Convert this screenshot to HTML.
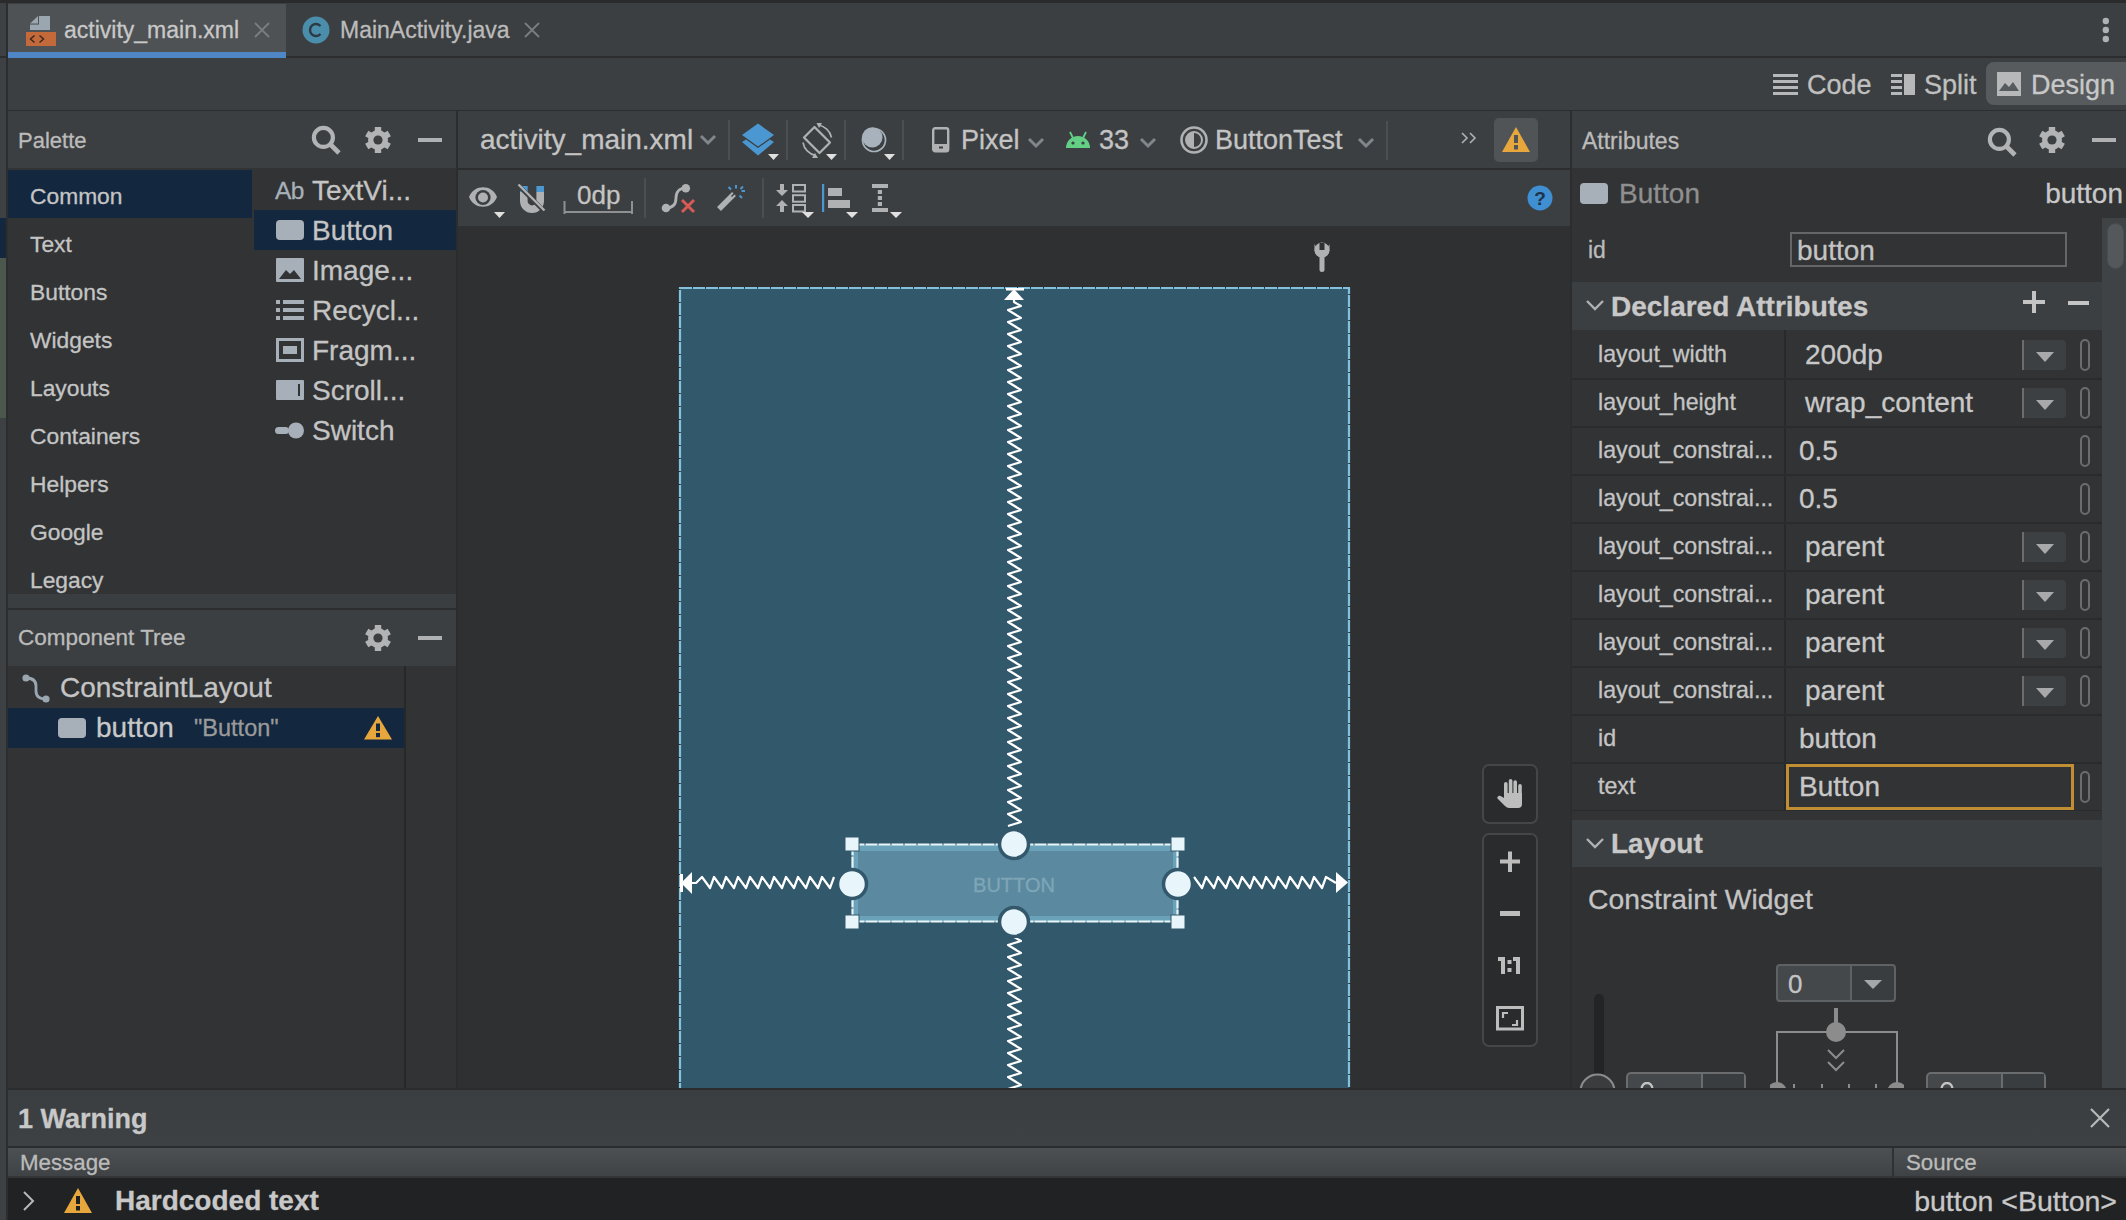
<!DOCTYPE html>
<html><head><meta charset="utf-8"><style>
html,body{margin:0;padding:0;width:2126px;height:1220px;overflow:hidden;background:#3c3f41;}
body>div,body>svg{position:absolute;}
.t{position:absolute;white-space:nowrap;font-family:"Liberation Sans", sans-serif;-webkit-text-stroke:0.3px currentColor;}
</style></head><body>
<div style="left:0px;top:0px;width:2126px;height:1220px;background:#3c3f41;"></div>
<div style="left:0px;top:0px;width:2126px;height:3px;background:#2a2b2d;"></div>
<div style="left:0px;top:3px;width:6px;height:1217px;background:#3e4143;"></div>
<div style="left:6px;top:3px;width:2px;height:1217px;background:#2b2d2f;"></div>
<div style="left:0px;top:218px;width:6px;height:40px;background:#13273f;"></div>
<div style="left:0px;top:258px;width:6px;height:160px;background:#4b564c;"></div>
<div style="left:0px;top:56px;width:2126px;height:1.5px;background:#2b2d2f;"></div>
<div style="left:8px;top:4px;width:278px;height:48px;background:#4e5254;"></div>
<div style="left:8px;top:52px;width:278px;height:6px;background:#4f86c6;"></div>
<svg style="left:26px;top:14px;" width="32" height="34" viewBox="0 0 32 34"><path d="M4 9.6 L12 2 L12 9.6 Z" fill="#9aa7b0"/><rect x="13" y="2" width="11" height="14" fill="#9aa7b0"/><rect x="4" y="10.6" width="20" height="5.4" fill="#9aa7b0"/><rect x="0" y="18" width="30" height="14" fill="#c4693a"/><path d="M8.5 21.5 L4.5 25 L8.5 28.5 M13.5 21.5 L17.5 25 L13.5 28.5" stroke="#3a2a22" stroke-width="1.5" fill="none"/></svg>
<div class="t" style="left:64px;top:18.53px;font-size:23px;line-height:23px;color:#c8c8c8;font-weight:400;">activity_main.xml</div>
<svg style="left:253px;top:21px;" width="18" height="18" viewBox="0 0 18 18"><path d="M2 2 L16 16 M16 2 L2 16" stroke="#7a7d80" stroke-width="1.8"/></svg>
<svg style="left:302px;top:16px;" width="28" height="28" viewBox="0 0 28 28"><circle cx="14" cy="14" r="13.5" fill="#4b8eab"/><path d="M18.5 10 A6 6 0 1 0 18.5 18" stroke="#2b3a44" stroke-width="2.4" fill="none"/></svg>
<div class="t" style="left:340px;top:18.53px;font-size:23px;line-height:23px;color:#bbbbbb;font-weight:400;">MainActivity.java</div>
<svg style="left:523px;top:21px;" width="18" height="18" viewBox="0 0 18 18"><path d="M2 2 L16 16 M16 2 L2 16" stroke="#7a7d80" stroke-width="1.8"/></svg>
<svg style="left:2098px;top:10px;" width="14" height="40" viewBox="0 0 14 40"><circle cx="7.8" cy="11" r="3.2" fill="#afb1b3"/><circle cx="7.8" cy="20" r="3.2" fill="#afb1b3"/><circle cx="7.8" cy="29" r="3.2" fill="#afb1b3"/></svg>
<div style="left:8px;top:110px;width:2118px;height:1px;background:#2b2d2f;"></div>
<div style="left:1986px;top:62px;width:140px;height:43px;background:#575b5e;border-radius:8px 0 0 8px"></div>
<svg style="left:1773px;top:73px;" width="26" height="22" viewBox="0 0 26 22"><rect x="0" y="1" width="25" height="3" fill="#b6b8ba"/><rect x="0" y="7" width="25" height="3" fill="#b6b8ba"/><rect x="0" y="13" width="25" height="3" fill="#b6b8ba"/><rect x="0" y="19" width="25" height="3" fill="#b6b8ba"/></svg>
<div class="t" style="left:1807px;top:72.14px;font-size:27px;line-height:27px;color:#c0c0c0;font-weight:400;">Code</div>
<svg style="left:1891px;top:73px;" width="26" height="22" viewBox="0 0 26 22"><rect x="0" y="1" width="11" height="3" fill="#b6b8ba"/><rect x="0" y="7" width="11" height="3" fill="#b6b8ba"/><rect x="0" y="13" width="11" height="3" fill="#b6b8ba"/><rect x="0" y="19" width="11" height="3" fill="#b6b8ba"/><rect x="13" y="1" width="11" height="21" fill="#b6b8ba"/></svg>
<div class="t" style="left:1924px;top:72.14px;font-size:27px;line-height:27px;color:#c0c0c0;font-weight:400;">Split</div>
<svg style="left:1997px;top:72px;" width="25" height="25" viewBox="0 0 25 25"><rect x="0" y="0" width="24" height="24" fill="#b6b8ba"/><path d="M2 19 L8 11 L12 15 L16 10 L22 19 Z" fill="#575b5e"/></svg>
<div class="t" style="left:2031px;top:72.14px;font-size:27px;line-height:27px;color:#c8c8c8;font-weight:400;">Design</div>
<div style="left:8px;top:111px;width:448px;height:57px;background:#3c3f41;"></div>
<div class="t" style="left:18px;top:130.38px;font-size:22px;line-height:22px;color:#bbbbbb;font-weight:400;">Palette</div>
<svg style="left:310px;top:124px;" width="34" height="34" viewBox="0 0 34 34"><circle cx="13.4" cy="13.4" r="9.5" stroke="#b1b3b5" stroke-width="4.2" fill="none"/><path d="M20.5 20.5 L29 29" stroke="#b1b3b5" stroke-width="4.6"/></svg>
<svg style="left:365px;top:127px;" width="26" height="26" viewBox="0 0 26 26"><rect x="9.8" y="0" width="6.4" height="26" transform="rotate(0 13 13)" fill="#b1b3b5"/><rect x="9.8" y="0" width="6.4" height="26" transform="rotate(60 13 13)" fill="#b1b3b5"/><rect x="9.8" y="0" width="6.4" height="26" transform="rotate(120 13 13)" fill="#b1b3b5"/><circle cx="13" cy="13" r="10" fill="#b1b3b5"/><circle cx="13" cy="13" r="4.6" fill="#3c3f41"/></svg>
<div style="left:418px;top:138px;width:24px;height:4px;background:#afb1b3;"></div>
<div style="left:8px;top:168px;width:448px;height:426px;background:#313335;"></div>
<div style="left:8px;top:170px;width:244px;height:48px;background:#13273f;"></div>
<div class="t" style="left:30px;top:185.20px;font-size:22.8px;line-height:22.8px;color:#c4c4c4;font-weight:400;">Common</div>
<div class="t" style="left:30px;top:233.20px;font-size:22.8px;line-height:22.8px;color:#c4c4c4;font-weight:400;">Text</div>
<div class="t" style="left:30px;top:281.20px;font-size:22.8px;line-height:22.8px;color:#c4c4c4;font-weight:400;">Buttons</div>
<div class="t" style="left:30px;top:329.20px;font-size:22.8px;line-height:22.8px;color:#c4c4c4;font-weight:400;">Widgets</div>
<div class="t" style="left:30px;top:377.20px;font-size:22.8px;line-height:22.8px;color:#c4c4c4;font-weight:400;">Layouts</div>
<div class="t" style="left:30px;top:425.20px;font-size:22.8px;line-height:22.8px;color:#c4c4c4;font-weight:400;">Containers</div>
<div class="t" style="left:30px;top:473.20px;font-size:22.8px;line-height:22.8px;color:#c4c4c4;font-weight:400;">Helpers</div>
<div class="t" style="left:30px;top:521.20px;font-size:22.8px;line-height:22.8px;color:#c4c4c4;font-weight:400;">Google</div>
<div class="t" style="left:30px;top:569.20px;font-size:22.8px;line-height:22.8px;color:#c4c4c4;font-weight:400;">Legacy</div>
<div style="left:254px;top:210px;width:202px;height:40px;background:#13273f;"></div>
<div class="t" style="left:312px;top:177.30px;font-size:28px;line-height:28px;color:#c4c4c4;font-weight:400;">TextVi...</div>
<div class="t" style="left:312px;top:217.30px;font-size:28px;line-height:28px;color:#c4c4c4;font-weight:400;">Button</div>
<div class="t" style="left:312px;top:257.30px;font-size:28px;line-height:28px;color:#c4c4c4;font-weight:400;">Image...</div>
<div class="t" style="left:312px;top:297.30px;font-size:28px;line-height:28px;color:#c4c4c4;font-weight:400;">Recycl...</div>
<div class="t" style="left:312px;top:337.30px;font-size:28px;line-height:28px;color:#c4c4c4;font-weight:400;">Fragm...</div>
<div class="t" style="left:312px;top:377.30px;font-size:28px;line-height:28px;color:#c4c4c4;font-weight:400;">Scroll...</div>
<div class="t" style="left:312px;top:417.30px;font-size:28px;line-height:28px;color:#c4c4c4;font-weight:400;">Switch</div>
<div class="t" style="left:275px;top:179.26px;font-size:24.5px;line-height:24.5px;color:#a7b0b8;font-weight:400;letter-spacing:-0.5px;-webkit-text-stroke:0.3px #a7b0b8">Ab</div>
<svg style="left:276px;top:220px;" width="29" height="21" viewBox="0 0 29 21"><rect x="0" y="0" width="28" height="20" rx="4" fill="#a7b0b8"/></svg>
<svg style="left:276px;top:258px;" width="29" height="25" viewBox="0 0 29 25"><rect x="0" y="0" width="28" height="24" rx="1" fill="#a7b0b8"/><path d="M3 21 L10 12 L14 16 L18 12 L25 21 Z" fill="#313335"/></svg>
<svg style="left:276px;top:300px;" width="29" height="22" viewBox="0 0 29 22"><rect x="0" y="0" width="4" height="4" fill="#a7b0b8"/><rect x="7" y="0" width="21" height="4" fill="#a7b0b8"/><rect x="0" y="8" width="4" height="4" fill="#a7b0b8"/><rect x="7" y="8" width="21" height="4" fill="#a7b0b8"/><rect x="0" y="16" width="4" height="4" fill="#a7b0b8"/><rect x="7" y="16" width="21" height="4" fill="#a7b0b8"/></svg>
<svg style="left:276px;top:338px;" width="29" height="25" viewBox="0 0 29 25"><rect x="1.5" y="1.5" width="25" height="21" fill="none" stroke="#a7b0b8" stroke-width="3"/><rect x="7" y="8" width="14" height="8" fill="#a7b0b8"/></svg>
<svg style="left:276px;top:380px;" width="29" height="21" viewBox="0 0 29 21"><rect x="0" y="0" width="28" height="20" rx="1" fill="#a7b0b8"/><rect x="22" y="4" width="2" height="12" fill="#313335"/></svg>
<svg style="left:275px;top:420px;" width="30" height="22" viewBox="0 0 30 22"><rect x="0" y="7" width="14" height="7" rx="3.5" fill="#a7b0b8"/><circle cx="21" cy="10.5" r="8" fill="#a7b0b8"/></svg>
<div style="left:8px;top:594px;width:448px;height:14px;background:#3b3e40;"></div>
<div style="left:8px;top:608px;width:448px;height:2px;background:#2b2d2f;"></div>
<div style="left:8px;top:610px;width:448px;height:56px;background:#3c3f41;"></div>
<div class="t" style="left:18px;top:626.95px;font-size:22.5px;line-height:22.5px;color:#bbbbbb;font-weight:400;">Component Tree</div>
<svg style="left:365px;top:625px;" width="26" height="26" viewBox="0 0 26 26"><rect x="9.8" y="0" width="6.4" height="26" transform="rotate(0 13 13)" fill="#b1b3b5"/><rect x="9.8" y="0" width="6.4" height="26" transform="rotate(60 13 13)" fill="#b1b3b5"/><rect x="9.8" y="0" width="6.4" height="26" transform="rotate(120 13 13)" fill="#b1b3b5"/><circle cx="13" cy="13" r="10" fill="#b1b3b5"/><circle cx="13" cy="13" r="4.6" fill="#3c3f41"/></svg>
<div style="left:418px;top:636px;width:24px;height:4px;background:#afb1b3;"></div>
<div style="left:8px;top:666px;width:448px;height:422px;background:#313335;"></div>
<div style="left:404px;top:666px;width:2px;height:422px;background:#262729;"></div>
<div style="left:8px;top:708px;width:396px;height:40px;background:#13273f;"></div>
<svg style="left:20px;top:672px;" width="32" height="32" viewBox="0 0 32 32"><circle cx="6" cy="6" r="3.6" fill="#9aa7b0"/><circle cx="26" cy="27" r="3.6" fill="#9aa7b0"/><path d="M6 6 C 12 6, 16 8, 16 14 L 16 19 C 16 25, 20 27, 26 27" stroke="#9aa7b0" stroke-width="2.8" fill="none"/></svg>
<div class="t" style="left:60px;top:674.30px;font-size:28px;line-height:28px;color:#c4c4c4;font-weight:400;">ConstraintLayout</div>
<svg style="left:58px;top:718px;" width="29" height="21" viewBox="0 0 29 21"><rect x="0" y="0" width="28" height="20" rx="4" fill="#a7b0b8"/></svg>
<div class="t" style="left:96px;top:714.30px;font-size:28px;line-height:28px;color:#c8c8c8;font-weight:400;">button</div>
<div class="t" style="left:194px;top:716.61px;font-size:23.5px;line-height:23.5px;color:#9a9a9a;font-weight:400;">"Button"</div>
<svg style="left:364px;top:716px;" width="28" height="23.5" viewBox="0 0 28 23.5"><path d="M14.0 0 L28 23.5 L0 23.5 Z" fill="#e7a73c"/><rect x="12.0" y="7.5200000000000005" width="4" height="7.5200000000000005" fill="#13273f"/><rect x="12.0" y="16.919999999999998" width="4" height="4.2299999999999995" fill="#13273f"/></svg>
<div style="left:456px;top:111px;width:2px;height:977px;background:#2a2c2e;"></div>
<div style="left:458px;top:111px;width:1112px;height:57px;background:#3c3f41;"></div>
<div style="left:458px;top:168px;width:1112px;height:2px;background:#2b2d2f;"></div>
<div style="left:458px;top:170px;width:1112px;height:56px;background:#3c3f41;"></div>
<div style="left:458px;top:226px;width:1112px;height:862px;background:#2e3032;"></div>
<div class="t" style="left:480px;top:126.30px;font-size:28px;line-height:28px;color:#c4c4c4;font-weight:400;">activity_main.xml</div>
<svg style="left:699px;top:134px;" width="18" height="12" viewBox="0 0 18 12"><path d="M2 2 L9 9 L16 2" stroke="#7f878c" stroke-width="3" fill="none"/></svg>
<div style="left:728px;top:120px;width:2px;height:40px;background:#4c4f52;"></div>
<div style="left:786px;top:120px;width:2px;height:40px;background:#4c4f52;"></div>
<div style="left:844px;top:120px;width:2px;height:40px;background:#4c4f52;"></div>
<div style="left:902px;top:120px;width:2px;height:40px;background:#4c4f52;"></div>
<svg style="left:741px;top:122px;" width="36" height="36" viewBox="0 0 36 36"><path d="M17 1.5 L33 13 L17 24.5 L1 13 Z" fill="#4b97d2"/><path d="M1 20 L5 17.5 L17 26 L29 17.5 L33 20 L17 33.5 Z" fill="#4b97d2"/></svg>
<svg style="left:768px;top:154px;" width="12" height="8" viewBox="0 0 12 8"><path d="M0 0 L11 0 L5.5 6 Z" fill="#e0e0e0"/></svg>
<svg style="left:798px;top:122px;" width="40" height="36" viewBox="0 0 40 36"><path d="M16.5 5 L32 20.5 L21.5 31 L6 15.5 Z" stroke="#afb1b3" stroke-width="2.2" fill="none" stroke-linejoin="round"/><path d="M20 3 A16 16 0 0 1 33.5 15.5" stroke="#afb1b3" stroke-width="1.6" fill="none"/><path d="M18.5 1 L24 1 L21 6 Z" fill="#afb1b3"/><path d="M5 20.5 A16 16 0 0 0 17.5 33.5" stroke="#afb1b3" stroke-width="1.6" fill="none"/><path d="M20 36 L14 36 L17 31 Z" fill="#afb1b3"/></svg>
<svg style="left:826px;top:154px;" width="12" height="8" viewBox="0 0 12 8"><path d="M0 0 L11 0 L5.5 6 Z" fill="#e0e0e0"/></svg>
<svg style="left:860px;top:126px;" width="34" height="30" viewBox="0 0 34 30"><circle cx="14" cy="14" r="11.5" stroke="#a7b2bc" stroke-width="1.7" fill="none"/><circle cx="12.3" cy="11.4" r="10.2" fill="#a7b2bc"/><path d="M12.3 1.2 A10.2 10.2 0 0 1 22.5 11.4 A11 11 0 0 1 12 24" fill="none"/></svg>
<svg style="left:884px;top:154px;" width="12" height="8" viewBox="0 0 12 8"><path d="M0 0 L11 0 L5.5 6 Z" fill="#e0e0e0"/></svg>
<svg style="left:932px;top:127px;" width="18" height="26" viewBox="0 0 18 26"><rect x="1.2" y="1.2" width="15" height="23" rx="2" stroke="#afb1b3" stroke-width="2.4" fill="none"/><rect x="1" y="17" width="16" height="7" fill="#afb1b3"/><rect x="7" y="19.5" width="4" height="2" fill="#3c3f41"/></svg>
<div class="t" style="left:961px;top:127.14px;font-size:27px;line-height:27px;color:#c4c4c4;font-weight:400;">Pixel</div>
<svg style="left:1027px;top:137px;" width="18" height="12" viewBox="0 0 18 12"><path d="M2 2 L9 9 L16 2" stroke="#7f878c" stroke-width="3" fill="none"/></svg>
<svg style="left:1065px;top:130px;" width="26" height="20" viewBox="0 0 26 20"><path d="M1 18 A12 12 0 0 1 25 18 Z" fill="#62cf84"/><path d="M5 2 L8 8 M21 2 L18 8" stroke="#62cf84" stroke-width="1.8"/><circle cx="8" cy="13" r="1.6" fill="#3c3f41"/><circle cx="18" cy="13" r="1.6" fill="#3c3f41"/></svg>
<div class="t" style="left:1099px;top:127.14px;font-size:27px;line-height:27px;color:#c4c4c4;font-weight:400;">33</div>
<svg style="left:1139px;top:137px;" width="18" height="12" viewBox="0 0 18 12"><path d="M2 2 L9 9 L16 2" stroke="#7f878c" stroke-width="3" fill="none"/></svg>
<svg style="left:1179px;top:125px;" width="30" height="30" viewBox="0 0 30 30"><circle cx="15" cy="15" r="12.5" stroke="#afb1b3" stroke-width="2.6" fill="none"/><path d="M15 7 A8 8 0 0 0 15 23 Z" fill="#afb1b3"/><circle cx="15" cy="15" r="8" stroke="#afb1b3" stroke-width="2" fill="none"/></svg>
<div class="t" style="left:1215px;top:127.14px;font-size:27px;line-height:27px;color:#c4c4c4;font-weight:400;">ButtonTest</div>
<svg style="left:1357px;top:137px;" width="18" height="12" viewBox="0 0 18 12"><path d="M2 2 L9 9 L16 2" stroke="#7f878c" stroke-width="3" fill="none"/></svg>
<div style="left:1386px;top:121px;width:2px;height:39px;background:#4c4f52;"></div>
<svg style="left:1460px;top:131px;" width="18" height="14" viewBox="0 0 18 14"><path d="M2 2 L7 7 L2 12 M10 2 L15 7 L10 12" stroke="#afb1b3" stroke-width="1.6" fill="none"/></svg>
<div style="left:1494px;top:118px;width:44px;height:44px;background:#505457;border-radius:5px"></div>
<svg style="left:1502px;top:127px;" width="28" height="25" viewBox="0 0 28 25"><path d="M14.0 0 L28 25 L0 25 Z" fill="#e7a73c"/><rect x="12.0" y="8.0" width="4" height="8.0" fill="#505457"/><rect x="12.0" y="18.0" width="4" height="4.5" fill="#505457"/></svg>
<svg style="left:468px;top:184px;" width="34" height="26" viewBox="0 0 34 26"><path d="M1 13 C 6 0, 24 0, 29 13 C 24 26, 6 26, 1 13 Z" fill="#afb1b3"/><circle cx="15" cy="13.5" r="7.6" fill="#3c3f41"/><circle cx="15" cy="13.5" r="5" fill="#afb1b3"/></svg>
<svg style="left:494px;top:212px;" width="12" height="8" viewBox="0 0 12 8"><path d="M0 0 L11 0 L5.5 6 Z" fill="#e0e0e0"/></svg>
<svg style="left:516px;top:182px;" width="34" height="34" viewBox="0 0 34 34"><path d="M7.8 10 L7.8 19 A8.2 8.2 0 0 0 24.2 19 L24.2 10" stroke="#afb1b3" stroke-width="7.6" fill="none"/><rect x="4" y="4" width="7.7" height="6" fill="#4b97d2"/><rect x="20.4" y="4" width="7.6" height="6" fill="#4b97d2"/><path d="M1 2 L29 30" stroke="#3c3f41" stroke-width="4.5"/><path d="M2.5 2.5 L28.5 28.5" stroke="#afb1b3" stroke-width="2.4"/></svg>
<div class="t" style="left:577px;top:182.49px;font-size:26px;line-height:26px;color:#c4c4c4;font-weight:400;">0dp</div>
<svg style="left:560px;top:198px;" width="76" height="18" viewBox="0 0 76 18"><path d="M4.5 3 L4.5 16 M72 3 L72 16 M4.5 14 L72 14" stroke="#8e9092" stroke-width="2" fill="none"/></svg>
<div style="left:644px;top:178px;width:2px;height:40px;background:#4c4f52;"></div>
<svg style="left:658px;top:182px;" width="40" height="34" viewBox="0 0 40 34"><circle cx="27.8" cy="6.2" r="4.3" fill="#afb1b3"/><circle cx="8" cy="26" r="4.3" fill="#afb1b3"/><path d="M8 26 C 15 26, 18 22, 18 16 C 18 10, 21 6.2, 27.8 6.2" stroke="#afb1b3" stroke-width="2.8" fill="none"/><path d="M24 18 L36 30 M36 18 L24 30" stroke="#d65a55" stroke-width="3"/></svg>
<svg style="left:714px;top:182px;" width="34" height="34" viewBox="0 0 34 34"><path d="M5 27 L20 12" stroke="#afb1b3" stroke-width="5.5"/><path d="M17.5 14.5 L20.5 11.5" stroke="#3c3f41" stroke-width="1.5"/><path d="M22 3 L22 6.5 M27.5 9 L31 9 M14.5 5 L17 7.5 M29 4.5 L26.5 7 M28 16 L25.5 13.5" stroke="#4b97d2" stroke-width="2"/></svg>
<div style="left:762px;top:178px;width:2px;height:40px;background:#4c4f52;"></div>
<svg style="left:760px;top:172px;" width="160" height="52" viewBox="0 0 160 52"><path d="M20 12 L24 12 L24 18 L28 18 L22 24 L16 18 L20 18 Z" fill="#afb1b3"/><path d="M20 40 L24 40 L24 34 L28 34 L22 28 L16 34 L20 34 Z" fill="#afb1b3"/><rect x="33" y="13" width="12" height="6.5" stroke="#afb1b3" stroke-width="2" fill="none"/><rect x="33" y="23.2" width="12" height="6.5" stroke="#afb1b3" stroke-width="2" fill="none"/><rect x="33" y="33" width="12" height="6.5" stroke="#afb1b3" stroke-width="2" fill="none"/><rect x="62" y="12" width="2.2" height="28" fill="#4b97d2"/><rect x="68" y="16" width="14" height="8" fill="#afb1b3"/><rect x="68" y="28" width="22" height="8" fill="#afb1b3"/><rect x="112" y="12" width="16" height="4" fill="#afb1b3"/><rect x="112" y="36" width="16" height="4" fill="#afb1b3"/><rect x="117.8" y="18" width="4.2" height="4" fill="#afb1b3"/><rect x="117.8" y="24" width="4.2" height="4" fill="#afb1b3"/><rect x="117.8" y="30" width="4.2" height="4" fill="#afb1b3"/><path d="M42 40 L54 40 L48 46 Z" fill="#e0e0e0"/><path d="M86 40 L98 40 L92 46 Z" fill="#e0e0e0"/><path d="M130 40 L142 40 L136 46 Z" fill="#e0e0e0"/></svg>
<svg style="left:1527px;top:185px;" width="26" height="26" viewBox="0 0 26 26"><circle cx="13" cy="13" r="12.5" fill="#3f8fd2"/><text x="13" y="20" text-anchor="middle" font-family="Liberation Sans" font-weight="bold" font-size="19" fill="#1f3347">?</text></svg>
<svg style="left:1311px;top:242px;" width="22" height="32" viewBox="0 0 22 32"><path d="M3.5 2 A8 8 0 0 0 18.5 2 L18.5 8 A7.5 7.5 0 0 1 3.5 8 Z" fill="#afb1b3"/><circle cx="11" cy="8" r="7.5" fill="#afb1b3"/><rect x="8.5" y="1" width="5" height="7" fill="#2e3032"/><rect x="8.5" y="12" width="5" height="18" rx="2.5" fill="#afb1b3"/></svg>
<div style="left:680px;top:288px;width:669px;height:800px;background:#32586b;"></div>
<svg style="left:677px;top:285px;" width="676" height="805" viewBox="0 0 676 805"><rect x="3" y="3" width="669" height="820" fill="none" stroke="#84c1dc" stroke-width="2.2" stroke-dasharray="12 1"/></svg>
<svg style="left:990px;top:280px;" width="50" height="580" viewBox="0 0 50 580"><path d="M24,20 L24,22 L31,26 L18,30 L31,38 L18,42 L31,50 L18,54 L31,62 L18,66 L31,74 L18,78 L31,86 L18,90 L31,98 L18,102 L31,110 L18,114 L31,122 L18,126 L31,134 L18,138 L31,146 L18,150 L31,158 L18,162 L31,170 L18,174 L31,182 L18,186 L31,194 L18,198 L31,206 L18,210 L31,218 L18,222 L31,230 L18,234 L31,242 L18,246 L31,254 L18,258 L31,266 L18,270 L31,278 L18,282 L31,290 L18,294 L31,302 L18,306 L31,314 L18,318 L31,326 L18,330 L31,338 L18,342 L31,350 L18,354 L31,362 L18,366 L31,374 L18,378 L31,386 L18,390 L31,398 L18,402 L31,410 L18,414 L31,422 L18,426 L31,434 L18,438 L31,446 L18,450 L31,458 L18,462 L31,470 L18,474 L31,482 L18,486 L31,494 L18,498 L31,506 L18,510 L31,518 L18,522 L31,530 L18,534 L31,542 L18,546" stroke="#ffffff" stroke-width="2.2" fill="none" stroke-linejoin="round"/><rect x="16" y="8" width="18" height="2.5" fill="#fff"/><path d="M24 9 L34 20 L14 20 Z" fill="#fff"/></svg>
<svg style="left:990px;top:925px;" width="50" height="165" viewBox="0 0 50 165"><path d="M24,10 L24,12 L31,16 L18,20 L31,28 L18,32 L31,40 L18,44 L31,52 L18,56 L31,64 L18,68 L31,76 L18,80 L31,88 L18,92 L31,100 L18,104 L31,112 L18,116 L31,124 L18,128 L31,136 L18,140 L31,148 L18,152 L31,160 L18,164" stroke="#ffffff" stroke-width="2.2" fill="none" stroke-linejoin="round"/></svg>
<svg style="left:676px;top:860px;" width="180" height="50" viewBox="0 0 180 50"><rect x="4" y="14" width="3" height="18" fill="#fff"/><path d="M5 23 L16 12 L16 34 Z" fill="#fff"/><path d="M16 23 L20 23 26,17 L34,28 L38,17 L46,28 L50,17 L58,28 L62,17 L70,28 L74,17 L82,28 L86,17 L94,28 L98,17 L106,28 L110,17 L118,28 L122,17 L130,28 L134,17 L142,28 L146,17 L154,28 L158,17" stroke="#fff" stroke-width="2.2" fill="none" stroke-linejoin="round"/></svg>
<svg style="left:1186px;top:860px;" width="170" height="50" viewBox="0 0 170 50"><path d="M8,17 L16,28 L20,17 L28,28 L32,17 L40,28 L44,17 L52,28 L56,17 L64,28 L68,17 L76,28 L80,17 L88,28 L92,17 L100,28 L104,17 L112,28 L116,17 L124,28 L128,17 L136,28 L140,17 L150 23" stroke="#fff" stroke-width="2.2" fill="none" stroke-linejoin="round"/><path d="M162 22.5 L150 12 L150 33 Z" fill="#fff"/></svg>
<div style="left:853px;top:845px;width:325px;height:77px;background:#6aa2ba;"></div>
<div style="left:858px;top:851px;width:315px;height:65px;background:#5b8aa0;"></div>
<div class="t" style="left:1014px;top:875.07px;font-size:20px;line-height:20px;color:#7fa6b7;font-weight:400;transform:translateX(-50%);">BUTTON</div>
<svg style="left:845px;top:837px;" width="342" height="94" viewBox="0 0 342 94"><rect x="7.5" y="7.5" width="325" height="77" fill="none" stroke="#e8f5fb" stroke-width="2.2" stroke-dasharray="12 1"/><rect x="0" y="0" width="14" height="14" fill="#e8f5fb" stroke="#32586b" stroke-width="1"/><rect x="0" y="78" width="14" height="14" fill="#e8f5fb" stroke="#32586b" stroke-width="1"/><rect x="326" y="0" width="14" height="14" fill="#e8f5fb" stroke="#32586b" stroke-width="1"/><rect x="326" y="78" width="14" height="14" fill="#e8f5fb" stroke="#32586b" stroke-width="1"/></svg>
<svg style="left:835px;top:867px;" width="34" height="34" viewBox="0 0 34 34"><circle cx="17" cy="17" r="14.5" fill="#e8f5fb" stroke="#33586b" stroke-width="3.5"/></svg>
<svg style="left:1161px;top:867px;" width="34" height="34" viewBox="0 0 34 34"><circle cx="17" cy="17" r="14.5" fill="#e8f5fb" stroke="#33586b" stroke-width="3.5"/></svg>
<svg style="left:997px;top:827px;" width="34" height="34" viewBox="0 0 34 34"><circle cx="17" cy="17" r="14.5" fill="#e8f5fb" stroke="#33586b" stroke-width="3.5"/></svg>
<svg style="left:997px;top:905px;" width="34" height="34" viewBox="0 0 34 34"><circle cx="17" cy="17" r="14.5" fill="#e8f5fb" stroke="#33586b" stroke-width="3.5"/></svg>
<div style="left:1482px;top:764px;width:56px;height:60px;background:#2a2b2d;border:2px solid #444648;border-radius:7px;box-sizing:border-box"></div>
<div style="left:1482px;top:833px;width:56px;height:214px;background:#2a2b2d;border:2px solid #444648;border-radius:7px;box-sizing:border-box"></div>
<svg style="left:1494px;top:778px;" width="34" height="34" viewBox="0 0 34 34"><rect x="10" y="4" width="3.6" height="14" rx="1.8" fill="#bdbdbd"/><rect x="14.8" y="1" width="3.6" height="16" rx="1.8" fill="#bdbdbd"/><rect x="19.4" y="2.2" width="3.6" height="15" rx="1.8" fill="#bdbdbd"/><rect x="24.2" y="6" width="3.6" height="12" rx="1.8" fill="#bdbdbd"/><path d="M10 15 L28 15 L28 26 Q28 30 24 30 L15 30 Q13 30 11 28 L3.5 20.5 Q2.5 19 4.5 18 Q6 17.5 7.5 18.5 L10 20 Z" fill="#bdbdbd"/></svg>
<svg style="left:1498px;top:850px;" width="24" height="24" viewBox="0 0 24 24"><rect x="10" y="1.5" width="4" height="20.5" fill="#bdbdbd"/><rect x="2" y="9.5" width="20" height="4" fill="#bdbdbd"/></svg>
<div style="left:1500px;top:911px;width:20px;height:5px;background:#bdbdbd;"></div>
<svg style="left:1497px;top:956px;" width="25" height="19" viewBox="0 0 25 19"><path d="M1 1 L8 1 L8 18 L4 18 L4 5 L1 5 Z" fill="#bdbdbd"/><rect x="10.5" y="4" width="4" height="4" fill="#bdbdbd"/><rect x="10.5" y="12" width="4" height="4" fill="#bdbdbd"/><path d="M16 1 L23 1 L23 18 L19 18 L19 5 L16 5 Z" fill="#bdbdbd"/></svg>
<svg style="left:1495px;top:1005px;" width="30" height="27" viewBox="0 0 30 27"><rect x="2.5" y="2.5" width="25" height="21.5" stroke="#bdbdbd" stroke-width="3" fill="none"/><path d="M8 13 L8 8 L13 8 M22 15 L22 20 L17 20" stroke="#bdbdbd" stroke-width="2.2" fill="none"/></svg>
<div style="left:1570px;top:111px;width:2px;height:977px;background:#2b2d2f;"></div>
<div style="left:1572px;top:111px;width:554px;height:57px;background:#3c3f41;"></div>
<div class="t" style="left:1582px;top:129.53px;font-size:23px;line-height:23px;color:#bbbbbb;font-weight:400;">Attributes</div>
<svg style="left:1986px;top:126px;" width="34" height="34" viewBox="0 0 34 34"><circle cx="13.4" cy="13.4" r="9.5" stroke="#b1b3b5" stroke-width="4.2" fill="none"/><path d="M20.5 20.5 L29 29" stroke="#b1b3b5" stroke-width="4.6"/></svg>
<svg style="left:2039px;top:127px;" width="26" height="26" viewBox="0 0 26 26"><rect x="9.8" y="0" width="6.4" height="26" transform="rotate(0 13 13)" fill="#b1b3b5"/><rect x="9.8" y="0" width="6.4" height="26" transform="rotate(60 13 13)" fill="#b1b3b5"/><rect x="9.8" y="0" width="6.4" height="26" transform="rotate(120 13 13)" fill="#b1b3b5"/><circle cx="13" cy="13" r="10" fill="#b1b3b5"/><circle cx="13" cy="13" r="4.6" fill="#3c3f41"/></svg>
<div style="left:2092px;top:138px;width:24px;height:4px;background:#afb1b3;"></div>
<div style="left:1572px;top:168px;width:554px;height:50px;background:#313335;"></div>
<svg style="left:1580px;top:183px;" width="29" height="22" viewBox="0 0 29 22"><rect x="0" y="0" width="28" height="21" rx="4" fill="#a7b0b8"/></svg>
<div class="t" style="left:1619px;top:180.30px;font-size:28px;line-height:28px;color:#8f8f8f;font-weight:400;">Button</div>
<div class="t" style="right:3px;top:180.30px;font-size:28px;line-height:28px;color:#c8c8c8;font-weight:400;">button</div>
<div style="left:1572px;top:218px;width:530px;height:64px;background:#313335;"></div>
<div class="t" style="left:1588px;top:238.53px;font-size:23px;line-height:23px;color:#bbbbbb;font-weight:400;">id</div>
<div style="left:1790px;top:232px;width:277px;height:35px;background:transparent;border:2px solid #646668;box-sizing:border-box"></div>
<div class="t" style="left:1797px;top:236.80px;font-size:28px;line-height:28px;color:#c4c4c4;font-weight:400;">button</div>
<div style="left:2102px;top:218px;width:24px;height:870px;background:#404345;"></div>
<div style="left:2107px;top:223px;width:17px;height:46px;background:#55585b;border-radius:8.5px;border:1.5px solid #4a4d50;box-sizing:border-box"></div>
<div style="left:1572px;top:282px;width:530px;height:48px;background:#3c3f41;"></div>
<svg style="left:1585px;top:299px;" width="22" height="14" viewBox="0 0 22 14"><path d="M2 2 L10 10 L18 2" stroke="#afb1b3" stroke-width="2.4" fill="none"/></svg>
<div class="t" style="left:1611px;top:293.30px;font-size:28px;line-height:28px;color:#c8c8c8;font-weight:700;">Declared Attributes</div>
<svg style="left:2023px;top:291px;" width="22" height="22" viewBox="0 0 22 22"><rect x="9" y="0" width="4" height="22" fill="#c4c4c4"/><rect x="0" y="9" width="22" height="4" fill="#c4c4c4"/></svg>
<div style="left:2068px;top:301px;width:21px;height:4px;background:#c4c4c4;"></div>
<div style="left:1572px;top:330px;width:530px;height:48px;background:#313335;"></div>
<div style="left:1784px;top:330px;width:2px;height:48px;background:#28292b;"></div>
<div class="t" style="left:1598px;top:343.36px;font-size:23.2px;line-height:23.2px;color:#c4c4c4;font-weight:400;">layout_width</div>
<div class="t" style="left:1805px;top:341.30px;font-size:28px;line-height:28px;color:#c8c8c8;font-weight:400;">200dp</div>
<div style="left:2022px;top:340px;width:44px;height:30px;background:#3d4042;border-radius:0 4px 4px 0"></div>
<div style="left:2022px;top:340px;width:2px;height:30px;background:#6a6c6e;"></div>
<svg style="left:2035px;top:351px;" width="20" height="12" viewBox="0 0 20 12"><path d="M1 1 L19 1 L10 11 Z" fill="#a7a9ab"/></svg>
<div style="left:2080px;top:339px;width:10px;height:32px;background:transparent;border:2px solid #6a6d70;border-radius:6px;box-sizing:border-box"></div>
<div style="left:1572px;top:378px;width:530px;height:48px;background:#313335;"></div>
<div style="left:1784px;top:378px;width:2px;height:48px;background:#28292b;"></div>
<div class="t" style="left:1598px;top:391.36px;font-size:23.2px;line-height:23.2px;color:#c4c4c4;font-weight:400;">layout_height</div>
<div class="t" style="left:1805px;top:389.30px;font-size:28px;line-height:28px;color:#c8c8c8;font-weight:400;">wrap_content</div>
<div style="left:2022px;top:388px;width:44px;height:30px;background:#3d4042;border-radius:0 4px 4px 0"></div>
<div style="left:2022px;top:388px;width:2px;height:30px;background:#6a6c6e;"></div>
<svg style="left:2035px;top:399px;" width="20" height="12" viewBox="0 0 20 12"><path d="M1 1 L19 1 L10 11 Z" fill="#a7a9ab"/></svg>
<div style="left:2080px;top:387px;width:10px;height:32px;background:transparent;border:2px solid #6a6d70;border-radius:6px;box-sizing:border-box"></div>
<div style="left:1572px;top:426px;width:530px;height:48px;background:#313335;"></div>
<div style="left:1784px;top:426px;width:2px;height:48px;background:#28292b;"></div>
<div class="t" style="left:1598px;top:439.36px;font-size:23.2px;line-height:23.2px;color:#c4c4c4;font-weight:400;">layout_constrai...</div>
<div class="t" style="left:1799px;top:437.30px;font-size:28px;line-height:28px;color:#c8c8c8;font-weight:400;">0.5</div>
<div style="left:2080px;top:435px;width:10px;height:32px;background:transparent;border:2px solid #6a6d70;border-radius:6px;box-sizing:border-box"></div>
<div style="left:1572px;top:474px;width:530px;height:48px;background:#313335;"></div>
<div style="left:1784px;top:474px;width:2px;height:48px;background:#28292b;"></div>
<div class="t" style="left:1598px;top:487.36px;font-size:23.2px;line-height:23.2px;color:#c4c4c4;font-weight:400;">layout_constrai...</div>
<div class="t" style="left:1799px;top:485.30px;font-size:28px;line-height:28px;color:#c8c8c8;font-weight:400;">0.5</div>
<div style="left:2080px;top:483px;width:10px;height:32px;background:transparent;border:2px solid #6a6d70;border-radius:6px;box-sizing:border-box"></div>
<div style="left:1572px;top:522px;width:530px;height:48px;background:#313335;"></div>
<div style="left:1784px;top:522px;width:2px;height:48px;background:#28292b;"></div>
<div class="t" style="left:1598px;top:535.36px;font-size:23.2px;line-height:23.2px;color:#c4c4c4;font-weight:400;">layout_constrai...</div>
<div class="t" style="left:1805px;top:533.30px;font-size:28px;line-height:28px;color:#c8c8c8;font-weight:400;">parent</div>
<div style="left:2022px;top:532px;width:44px;height:30px;background:#3d4042;border-radius:0 4px 4px 0"></div>
<div style="left:2022px;top:532px;width:2px;height:30px;background:#6a6c6e;"></div>
<svg style="left:2035px;top:543px;" width="20" height="12" viewBox="0 0 20 12"><path d="M1 1 L19 1 L10 11 Z" fill="#a7a9ab"/></svg>
<div style="left:2080px;top:531px;width:10px;height:32px;background:transparent;border:2px solid #6a6d70;border-radius:6px;box-sizing:border-box"></div>
<div style="left:1572px;top:570px;width:530px;height:48px;background:#313335;"></div>
<div style="left:1784px;top:570px;width:2px;height:48px;background:#28292b;"></div>
<div class="t" style="left:1598px;top:583.36px;font-size:23.2px;line-height:23.2px;color:#c4c4c4;font-weight:400;">layout_constrai...</div>
<div class="t" style="left:1805px;top:581.30px;font-size:28px;line-height:28px;color:#c8c8c8;font-weight:400;">parent</div>
<div style="left:2022px;top:580px;width:44px;height:30px;background:#3d4042;border-radius:0 4px 4px 0"></div>
<div style="left:2022px;top:580px;width:2px;height:30px;background:#6a6c6e;"></div>
<svg style="left:2035px;top:591px;" width="20" height="12" viewBox="0 0 20 12"><path d="M1 1 L19 1 L10 11 Z" fill="#a7a9ab"/></svg>
<div style="left:2080px;top:579px;width:10px;height:32px;background:transparent;border:2px solid #6a6d70;border-radius:6px;box-sizing:border-box"></div>
<div style="left:1572px;top:618px;width:530px;height:48px;background:#313335;"></div>
<div style="left:1784px;top:618px;width:2px;height:48px;background:#28292b;"></div>
<div class="t" style="left:1598px;top:631.36px;font-size:23.2px;line-height:23.2px;color:#c4c4c4;font-weight:400;">layout_constrai...</div>
<div class="t" style="left:1805px;top:629.30px;font-size:28px;line-height:28px;color:#c8c8c8;font-weight:400;">parent</div>
<div style="left:2022px;top:628px;width:44px;height:30px;background:#3d4042;border-radius:0 4px 4px 0"></div>
<div style="left:2022px;top:628px;width:2px;height:30px;background:#6a6c6e;"></div>
<svg style="left:2035px;top:639px;" width="20" height="12" viewBox="0 0 20 12"><path d="M1 1 L19 1 L10 11 Z" fill="#a7a9ab"/></svg>
<div style="left:2080px;top:627px;width:10px;height:32px;background:transparent;border:2px solid #6a6d70;border-radius:6px;box-sizing:border-box"></div>
<div style="left:1572px;top:666px;width:530px;height:48px;background:#313335;"></div>
<div style="left:1784px;top:666px;width:2px;height:48px;background:#28292b;"></div>
<div class="t" style="left:1598px;top:679.36px;font-size:23.2px;line-height:23.2px;color:#c4c4c4;font-weight:400;">layout_constrai...</div>
<div class="t" style="left:1805px;top:677.30px;font-size:28px;line-height:28px;color:#c8c8c8;font-weight:400;">parent</div>
<div style="left:2022px;top:676px;width:44px;height:30px;background:#3d4042;border-radius:0 4px 4px 0"></div>
<div style="left:2022px;top:676px;width:2px;height:30px;background:#6a6c6e;"></div>
<svg style="left:2035px;top:687px;" width="20" height="12" viewBox="0 0 20 12"><path d="M1 1 L19 1 L10 11 Z" fill="#a7a9ab"/></svg>
<div style="left:2080px;top:675px;width:10px;height:32px;background:transparent;border:2px solid #6a6d70;border-radius:6px;box-sizing:border-box"></div>
<div style="left:1572px;top:714px;width:530px;height:48px;background:#313335;"></div>
<div style="left:1784px;top:714px;width:2px;height:48px;background:#28292b;"></div>
<div class="t" style="left:1598px;top:727.36px;font-size:23.2px;line-height:23.2px;color:#c4c4c4;font-weight:400;">id</div>
<div class="t" style="left:1799px;top:725.30px;font-size:28px;line-height:28px;color:#c8c8c8;font-weight:400;">button</div>
<div style="left:1572px;top:762px;width:530px;height:48px;background:#313335;"></div>
<div style="left:1784px;top:762px;width:2px;height:48px;background:#28292b;"></div>
<div class="t" style="left:1598px;top:775.36px;font-size:23.2px;line-height:23.2px;color:#c4c4c4;font-weight:400;">text</div>
<div class="t" style="left:1799px;top:773.30px;font-size:28px;line-height:28px;color:#c8c8c8;font-weight:400;">Button</div>
<div style="left:2080px;top:771px;width:10px;height:32px;background:transparent;border:2px solid #6a6d70;border-radius:6px;box-sizing:border-box"></div>
<div style="left:1572px;top:378px;width:530px;height:1.5px;background:#2a2b2d;"></div>
<div style="left:1572px;top:426px;width:530px;height:1.5px;background:#2a2b2d;"></div>
<div style="left:1572px;top:474px;width:530px;height:1.5px;background:#2a2b2d;"></div>
<div style="left:1572px;top:522px;width:530px;height:1.5px;background:#2a2b2d;"></div>
<div style="left:1572px;top:570px;width:530px;height:1.5px;background:#2a2b2d;"></div>
<div style="left:1572px;top:618px;width:530px;height:1.5px;background:#2a2b2d;"></div>
<div style="left:1572px;top:666px;width:530px;height:1.5px;background:#2a2b2d;"></div>
<div style="left:1572px;top:714px;width:530px;height:1.5px;background:#2a2b2d;"></div>
<div style="left:1572px;top:762px;width:530px;height:1.5px;background:#2a2b2d;"></div>
<div style="left:1572px;top:810px;width:530px;height:1.5px;background:#2a2b2d;"></div>
<div style="left:1786px;top:764px;width:288px;height:46px;background:transparent;border:3px solid #c28e34;box-sizing:border-box"></div>
<div style="left:1572px;top:811px;width:530px;height:9px;background:#313335;"></div>
<div style="left:1572px;top:820px;width:530px;height:47px;background:#3c3f41;"></div>
<svg style="left:1585px;top:837px;" width="22" height="14" viewBox="0 0 22 14"><path d="M2 2 L10 10 L18 2" stroke="#afb1b3" stroke-width="2.4" fill="none"/></svg>
<div class="t" style="left:1611px;top:830.30px;font-size:28px;line-height:28px;color:#c8c8c8;font-weight:700;">Layout</div>
<div style="left:1572px;top:867px;width:530px;height:221px;background:#2f3133;"></div>
<div class="t" style="left:1588px;top:884.54px;font-size:28.3px;line-height:28.3px;color:#c4c4c4;font-weight:400;">Constraint Widget</div>
<div style="left:1776px;top:964px;width:120px;height:38px;background:#45484a;border:2px solid #5f6264;border-radius:4px;box-sizing:border-box"></div>
<div style="left:1850px;top:966px;width:44px;height:34px;background:#3a3d3f;border-left:2px solid #5f6264;border-radius:0 3px 3px 0;box-sizing:border-box"></div>
<div class="t" style="left:1788px;top:970.99px;font-size:26px;line-height:26px;color:#c4c4c4;font-weight:400;">0</div>
<svg style="left:1863px;top:979px;" width="20" height="12" viewBox="0 0 20 12"><path d="M1 1 L19 1 L10 10 Z" fill="#a5a7a9"/></svg>
<svg style="left:1770px;top:1004px;" width="134" height="90" viewBox="0 0 134 90"><rect x="64" y="4" width="4" height="18" fill="#8c8c8c"/><circle cx="66" cy="28" r="10" fill="#8c8c8c"/><path d="M7 88 L7 28 L127 28 L127 88" stroke="#8c8c8c" stroke-width="2" fill="none"/><path d="M58 46 L66 54 L74 46 M58 58 L66 66 L74 58" stroke="#8c8c8c" stroke-width="2" fill="none"/><path d="M24 80 L24 88 M52 80 L52 88 M79 80 L79 88 M106 80 L106 88" stroke="#8c8c8c" stroke-width="2"/><circle cx="7" cy="88" r="10" fill="#8c8c8c"/><circle cx="127" cy="88" r="10" fill="#8c8c8c"/></svg>
<div style="left:1594px;top:994px;width:10px;height:90px;background:#232426;border-radius:5px"></div>
<svg style="left:1578px;top:1072px;" width="40" height="20" viewBox="0 0 40 20"><circle cx="19.5" cy="19.5" r="17" stroke="#8a8c8e" stroke-width="2" fill="#3a3c3e"/></svg>
<div style="left:1626px;top:1072px;width:120px;height:30px;background:#45484a;border:2px solid #6a6c6e;border-radius:5px;box-sizing:border-box"></div>
<div style="left:1701px;top:1074px;width:43px;height:14px;background:#3a3d3f;border-left:2px solid #6a6c6e;box-sizing:border-box"></div>
<svg style="left:1640px;top:1082px;" width="14" height="8" viewBox="0 0 14 8"><path d="M1.5 7 A5 5.5 0 0 1 12.5 7" stroke="#c4c4c4" stroke-width="2.4" fill="none"/></svg>
<div style="left:1926px;top:1072px;width:120px;height:30px;background:#45484a;border:2px solid #6a6c6e;border-radius:5px;box-sizing:border-box"></div>
<div style="left:2001px;top:1074px;width:43px;height:14px;background:#3a3d3f;border-left:2px solid #6a6c6e;box-sizing:border-box"></div>
<svg style="left:1940px;top:1082px;" width="14" height="8" viewBox="0 0 14 8"><path d="M1.5 7 A5 5.5 0 0 1 12.5 7" stroke="#c4c4c4" stroke-width="2.4" fill="none"/></svg>
<div style="left:8px;top:1088px;width:2118px;height:2px;background:#2b2c2e;"></div>
<div style="left:8px;top:1090px;width:2118px;height:56px;background:linear-gradient(#3b3e40,#3e4143);"></div>
<div class="t" style="left:18px;top:1106.14px;font-size:27px;line-height:27px;color:#c8c8c8;font-weight:700;">1 Warning</div>
<svg style="left:2089px;top:1107px;" width="22" height="22" viewBox="0 0 22 22"><path d="M2 2 L20 20 M20 2 L2 20" stroke="#b6b8ba" stroke-width="2.2"/></svg>
<div style="left:8px;top:1146px;width:2118px;height:2px;background:#2b2c2e;"></div>
<div style="left:8px;top:1148px;width:2118px;height:28px;background:linear-gradient(#4d5053,#404345);"></div>
<div style="left:8px;top:1176px;width:2118px;height:2px;background:#333537;"></div>
<div class="t" style="left:20px;top:1152.12px;font-size:22.3px;line-height:22.3px;color:#bbbbbb;font-weight:400;">Message</div>
<div style="left:1892px;top:1148px;width:2px;height:30px;background:#2f3133;"></div>
<div class="t" style="left:1906px;top:1152.12px;font-size:22.3px;line-height:22.3px;color:#bbbbbb;font-weight:400;">Source</div>
<div style="left:8px;top:1178px;width:2118px;height:42px;background:#212224;"></div>
<svg style="left:22px;top:1190px;" width="14" height="22" viewBox="0 0 14 22"><path d="M2 2 L11 11 L2 20" stroke="#b6b8ba" stroke-width="2" fill="none"/></svg>
<svg style="left:64px;top:1188px;" width="28" height="25" viewBox="0 0 28 25"><path d="M14.0 0 L28 25 L0 25 Z" fill="#e7a73c"/><rect x="12.0" y="8.0" width="4" height="8.0" fill="#1f2022"/><rect x="12.0" y="18.0" width="4" height="4.5" fill="#1f2022"/></svg>
<div class="t" style="left:115px;top:1187.30px;font-size:28px;line-height:28px;color:#c8c8c8;font-weight:700;">Hardcoded text</div>
<div class="t" style="right:9px;top:1186.87px;font-size:28.5px;line-height:28.5px;color:#c8c8c8;font-weight:400;">button &lt;Button&gt;</div>
</body></html>
